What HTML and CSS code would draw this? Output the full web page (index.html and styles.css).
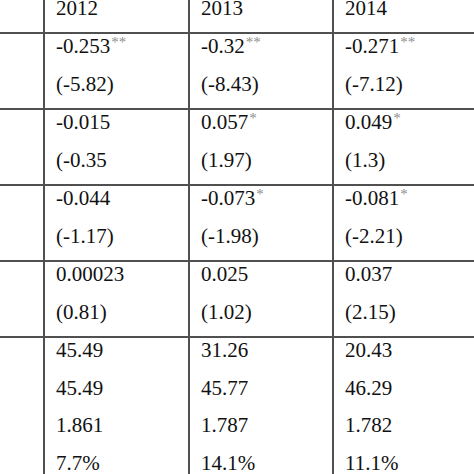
FILE: index.html
```html
<!DOCTYPE html>
<html>
<head>
<meta charset="utf-8">
<link rel="stylesheet" href="styles.css">
</head>
<body>
<div class="tbl">
  <div class="c head first"></div>
  <div class="c head"><div class="ln">2012</div></div>
  <div class="c head"><div class="ln">2013</div></div>
  <div class="c head"><div class="ln">2014</div></div>

  <div class="c row first"></div>
  <div class="c row"><div class="ln">-0.253<sup>**</sup></div><div class="ln">(-5.82)</div></div>
  <div class="c row"><div class="ln">-0.32<sup>**</sup></div><div class="ln">(-8.43)</div></div>
  <div class="c row"><div class="ln">-0.271<sup>**</sup></div><div class="ln">(-7.12)</div></div>

  <div class="c row first"></div>
  <div class="c row"><div class="ln">-0.015</div><div class="ln">(-0.35</div></div>
  <div class="c row"><div class="ln">0.057<sup>*</sup></div><div class="ln">(1.97)</div></div>
  <div class="c row"><div class="ln">0.049<sup>*</sup></div><div class="ln">(1.3)</div></div>

  <div class="c row first"></div>
  <div class="c row"><div class="ln">-0.044</div><div class="ln">(-1.17)</div></div>
  <div class="c row"><div class="ln">-0.073<sup>*</sup></div><div class="ln">(-1.98)</div></div>
  <div class="c row"><div class="ln">-0.081<sup>*</sup></div><div class="ln">(-2.21)</div></div>

  <div class="c row first"></div>
  <div class="c row"><div class="ln">0.00023</div><div class="ln">(0.81)</div></div>
  <div class="c row"><div class="ln">0.025</div><div class="ln">(1.02)</div></div>
  <div class="c row"><div class="ln">0.037</div><div class="ln">(2.15)</div></div>

  <div class="c row first"></div>
  <div class="c row"><div class="ln">45.49</div><div class="ln">45.49</div><div class="ln">1.861</div><div class="ln">7.7%</div></div>
  <div class="c row"><div class="ln">31.26</div><div class="ln">45.77</div><div class="ln">1.787</div><div class="ln">14.1%</div></div>
  <div class="c row"><div class="ln">20.43</div><div class="ln">46.29</div><div class="ln">1.782</div><div class="ln">11.1%</div></div>
</div>
</body>
</html>
```
FILE: styles.css
```css
html, body {
  margin: 0;
  padding: 0;
  background: #ffffff;
  overflow: hidden;
}
body {
  width: 474px;
  height: 474px;
  font-family: "Liberation Serif", "Times New Roman", serif;
  font-size: 21px;
  color: #111111;
}
.tbl {
  display: grid;
  grid-template-columns: 43px 145px 144px 146px;
  width: 478px;
}
.c {
  border-left: 2px solid #505050;
  padding-left: 11px;
  box-sizing: border-box;
}
.c.first {
  border-left: none;
  padding-left: 0;
}
.head {
  height: 32px;
}
.head .ln {
  line-height: 16px;
}
.row {
  border-top: 2px solid #505050;
  min-height: 76px;
  padding-bottom: 12.5px;
}
.row .ln {
  line-height: 24px;
  white-space: nowrap;
}
.row .ln + .ln {
  margin-top: 13.5px;
}
sup {
  font-size: 15px;
  line-height: 0;
  color: #8f8f8f;
  vertical-align: 6px;
  margin-left: 1px;
}
```
